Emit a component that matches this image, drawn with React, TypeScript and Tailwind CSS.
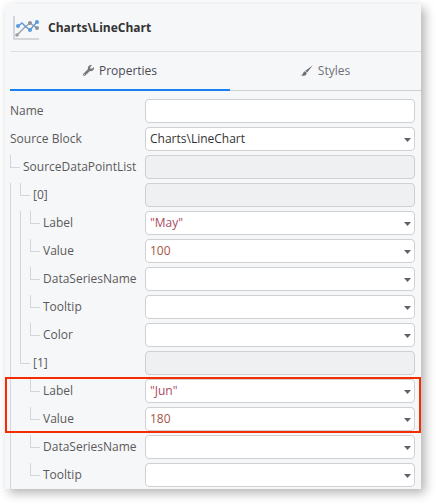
import { FaWrench } from 'react-icons/fa'

type Field = {
  label: string
  guides?: boolean[]
  elbow?: boolean
  value?: string
  valueClass?: string
  disabled?: boolean
  select?: boolean
  short?: boolean
}

function Caret() {
  return (
    <svg width="7" height="4" viewBox="0 0 7 4" className="absolute right-[3px] top-[10px]">
      <path d="M0 0h7L3.5 4z" fill="#5f6368" />
    </svg>
  )
}

function Row({ label, guides = [], elbow, value, valueClass = 'text-[#333]', disabled, select, short }: Field) {
  return (
    <div className={`flex ${short ? 'h-[26px]' : 'h-[28px]'}`}>
      <div className="flex w-[135px] shrink-0">
        {guides.map((on, i) => (
          <span key={i} className={`w-[10px] shrink-0 self-stretch ${on ? 'border-l border-[#d4d5d8]' : ''}`} />
        ))}
        {elbow && <span className="h-[13px] w-[10px] shrink-0 border-b border-l border-[#d4d5d8]" />}
        <span className={`flex h-[24px] items-center whitespace-nowrap text-[#5a5a5a] ${elbow ? 'pl-[3px]' : ''}`}>{label}</span>
      </div>
      <div
        className={`relative flex h-[24px] flex-1 items-center rounded-[4px] border border-[#cfd0d3] px-[4px] ${
          disabled ? 'bg-[#eff0f2]' : 'bg-white'
        } ${valueClass}`}
      >
        {value}
        {select && <Caret />}
      </div>
    </div>
  )
}

const stringValue = 'text-[#a84a66]'
const numberValue = 'text-[#a5553f]'

export default function App() {
  return (
    <div className="min-h-[504px] bg-white pl-[5px] pt-[4px] font-['Open_Sans',sans-serif] text-[12px]">
      <div className="w-[416px] bg-[#f6f7f9] pl-[5px] shadow-[4px_4px_10px_rgba(0,0,0,0.3)]">
        {/* Header */}
        <div className="flex h-[48px] items-center border-b border-[#dedfe2] pl-[3px]">
          <svg width="27" height="26" viewBox="0 0 27 26" className="mr-[8px] mt-[1px]">
            <path d="M1 1v23h25" fill="none" stroke="#c9cbce" strokeWidth="1.5" />
            <path d="M4 20l7-7 6-5 7 5" fill="none" stroke="#9a9da0" strokeWidth="1.3" />
            <path d="M4 12l5-4 4 4 4 3 7-8" fill="none" stroke="#5b9bdc" strokeWidth="1.5" />
            <circle cx="4" cy="20" r="1.8" fill="#9a9da0" />
            <circle cx="17" cy="8" r="2" fill="#8f9295" />
            <circle cx="24" cy="13" r="2" fill="#8f9295" />
            <circle cx="5" cy="11" r="2" fill="#5b9bdc" />
            <circle cx="17" cy="15" r="2" fill="#5b9bdc" />
            <circle cx="24" cy="7" r="2" fill="#5b9bdc" />
          </svg>
          <span className="font-bold text-[#333]">Charts\LineChart</span>
        </div>

        {/* Tabs */}
        <div className="flex h-[39px] border-b border-[#cfd0d3]">
          <div className="mb-[-1px] flex w-[220px] items-center justify-center gap-[5px] border-b-2 border-[#1a7ff0] text-[#4a4a52]">
            <FaWrench className="h-[11px] w-[11px] text-[#77787b]" />
            Properties
          </div>
          <div className="flex flex-1 items-center justify-center gap-[5px] text-[#6f7278]">
            <svg width="12" height="12" viewBox="0 0 12 12">
              <path d="M11.800.2L4.400 5.800 6.200 7.600z" fill="#6d6e71" />
              <path d="M4 6.200c-1.800.2-1.600 2.200-2.400 3-.4.400-1 .6-1.600.7 1.500 1.300 4 1.300 5.100-.1.700-.9.600-1.900.1-2.500z" fill="#6d6e71" />
            </svg>
            Styles
          </div>
        </div>

        {/* Property rows */}
        <div className="pr-[6px] pt-[8px]">
          <Row label="Name" />
          <Row label="Source Block" value="Charts\LineChart" select />
          <Row label="SourceDataPointList" elbow disabled />
          <Row label="[0]" guides={[true]} elbow disabled />
          <Row label="Label" guides={[true, true]} elbow value={'"May"'} valueClass={stringValue} select />
          <Row label="Value" guides={[true, true]} elbow value="100" valueClass={numberValue} select />
          <Row label="DataSeriesName" guides={[true, true]} elbow select />
          <Row label="Tooltip" guides={[true, true]} elbow select />
          <Row label="Color" guides={[true, true]} elbow select />
          <Row label="[1]" guides={[true]} elbow disabled />
          <div className="relative">
            <Row label="Label" guides={[true, false]} elbow value={'"Jun"'} valueClass={stringValue} select />
            <Row label="Value" guides={[true, false]} elbow value="180" valueClass={numberValue} select />
            <span className="absolute bottom-[2px] left-[-5px] right-[-6px] top-[-2px] border-2 border-[#f52c00]" />
          </div>
          <Row label="DataSeriesName" guides={[true, false]} elbow select />
          <Row label="Tooltip" guides={[true, false]} elbow select short />
        </div>
      </div>
    </div>
  )
}
